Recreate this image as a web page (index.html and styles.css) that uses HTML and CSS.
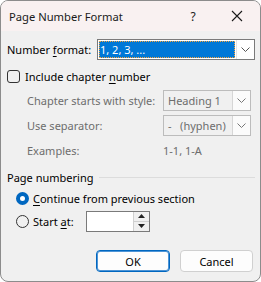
FILE: index.html
```html
<!DOCTYPE html>
<html>
<head>
<meta charset="utf-8">
<link rel="stylesheet" href="styles.css">
</head>
<body>
<div class="window">
  <div class="titlebar">
    <span class="title">Page Number Format</span>
    <span class="help">?</span>
    <span class="close">
      <svg width="12" height="12" viewBox="0 0 12 12"><path d="M1 1L11 11M11 1L1 11" stroke="#1a1a1a" stroke-width="1.1" fill="none"/></svg>
    </span>
  </div>
  <div class="content">
    <div class="row format-row">
      <span class="label">Number <u>f</u>ormat:</span>
      <div class="combo focused">
        <div class="combo-value"><span class="sel">1, 2, 3, ...</span></div>
        <div class="combo-btn">
          <svg width="9" height="5" viewBox="0 0 9 5"><path d="M0.5 0.5L4.5 4.5L8.5 0.5" stroke="#555" fill="none"/></svg>
        </div>
      </div>
    </div>

    <div class="row check-row">
      <span class="checkbox"></span>
      <span>Include chapter <u>n</u>umber</span>
    </div>

    <div class="row sub-row">
      <span class="label dis">Chapter starts with style:</span>
      <div class="combo disabled">
        <div class="combo-value">Heading 1</div>
        <div class="combo-btn">
          <svg width="9" height="5" viewBox="0 0 9 5"><path d="M0.5 0.5L4.5 4.5L8.5 0.5" stroke="#777" fill="none"/></svg>
        </div>
      </div>
    </div>

    <div class="row sub-row sep-row">
      <span class="label dis">Use separator:</span>
      <div class="combo disabled">
        <div class="combo-value">-&nbsp;&nbsp;&nbsp;(hyphen)</div>
        <div class="combo-btn">
          <svg width="9" height="5" viewBox="0 0 9 5"><path d="M0.5 0.5L4.5 4.5L8.5 0.5" stroke="#777" fill="none"/></svg>
        </div>
      </div>
    </div>

    <div class="row ex-row">
      <span class="label dis">Examples:</span>
      <span class="dis ex-val">1-1, 1-A</span>
    </div>

    <div class="group-head">
      <span>Page numbering</span>
      <span class="rule"></span>
    </div>

    <div class="row radio-row first-radio">
      <span class="radio on"></span>
      <span><u>C</u>ontinue from previous section</span>
    </div>

    <div class="row radio-row start-row">
      <span class="radio"></span>
      <span class="start-label">Start <u>a</u>t:</span>
      <div class="spin">
        <div class="spin-field"></div>
        <div class="spin-btns">
          <div class="spin-btn"><svg width="7" height="4" viewBox="0 0 7 4"><path d="M0 4L3.5 0L7 4Z" fill="#222"/></svg></div>
          <div class="spin-btn"><svg width="7" height="4" viewBox="0 0 7 4"><path d="M0 0L3.5 4L7 0Z" fill="#222"/></svg></div>
        </div>
      </div>
    </div>

    <div class="buttons">
      <button class="btn primary">OK</button>
      <button class="btn">Cancel</button>
    </div>
  </div>
</div>
</body>
</html>
```

FILE: styles.css
```css
* { box-sizing: border-box; }
html, body { margin: 0; padding: 0; background: #ffffff; }
body {
  font-family: "Noto Sans", "Open Sans", "Liberation Sans", sans-serif;
  font-size: 11px;
  color: #000;
}
u { text-decoration: underline; text-underline-offset: 2px; }

.window {
  width: 261px;
  height: 282px;
  border: 1px solid #8c8c8c;
  border-radius: 8px;
  background: #f0f0f0;
  overflow: hidden;
  display: flex;
  flex-direction: column;
}

.titlebar {
  height: 30px;
  flex: none;
  background: #f9f1f1;
  display: flex;
  align-items: center;
  padding-left: 8px;
}
.title { flex: 1; font-size: 11.2px; color: #1a1a1a; }
.help { width: 46px; text-align: center; font-size: 12px; color: #1a1a1a; margin-right: -2px; }
.close { width: 46px; display: flex; justify-content: center; align-items: center; }

.content {
  flex: 1;
  padding: 8px 5px 0 6px;
  display: flex;
  flex-direction: column;
}

.row { display: flex; align-items: center; }
.label { white-space: nowrap; }
.dis { color: #6d6d6d; }

.format-row { height: 21px; flex: none; }
.format-row .label { width: 90px; }

.combo {
  display: flex;
  height: 21px;
  border: 1px solid #7a7a7a;
  background: #fff;
}
.format-row .combo { width: 158px; }
.combo-value {
  flex: 1;
  display: flex;
  align-items: center;
  padding-left: 2px;
  white-space: nowrap;
}
.combo.focused .combo-value { padding: 1px; }
.sel {
  flex: 1;
  align-self: stretch;
  display: flex;
  align-items: center;
  background: #0078d7;
  color: #fff;
  padding-left: 1px;
  outline: 1px dotted #f7a43b;
  outline-offset: -1px;
}
.combo-btn {
  width: 18px;
  display: flex;
  align-items: center;
  justify-content: center;
  background: #fff;
  border-left: 1px solid #e3e3e3;
}

.check-row { margin-top: 9px; height: 14px; flex: none; }
.checkbox {
  width: 13px;
  height: 13px;
  border: 1px solid #333;
  border-radius: 3px;
  background: #f0f0f0;
  margin-right: 5px;
}

.sub-row { margin-top: 6px; height: 23px; padding-left: 20px; flex: none; }
.sub-row .label { width: 136px; }
.sep-row { margin-top: 2px; }
.combo.disabled {
  width: 88px;
  border-color: #bcbcbc;
  background: #f0f0f0;
  color: #6d6d6d;
}
.combo.disabled .combo-value { padding-left: 4px; }
.combo.disabled .combo-btn { background: #fbfbfb; border-left: 1px solid #d6d6d6; }

.ex-row { margin-top: 2px; height: 22px; padding-left: 20px; flex: none; }
.ex-row .label { width: 136px; }

.group-head {
  margin-top: 6px;
  height: 20px;
  flex: none;
  display: flex;
  align-items: center;
}
.group-head .rule { flex: 1; height: 1px; background: #dcdcdc; margin-left: 6px; }

.radio-row { padding-left: 9px; height: 22px; flex: none; }
.first-radio { margin-top: 0; }
.radio {
  width: 13px;
  height: 13px;
  border-radius: 50%;
  border: 1px solid #333;
  margin-right: 4px;
  background: #f0f0f0;
}
.radio.on {
  border: 4px solid #0067c0;
  background: #fff;
}
.start-row { margin-top: 1px; }
.start-label { width: 53px; }
.spin {
  display: flex;
  width: 64px;
  height: 21px;
  border: 1px solid #7a7a7a;
  background: #fff;
}
.spin-field { flex: 1; }
.spin-btns {
  width: 16px;
  display: flex;
  flex-direction: column;
  border-left: 1px solid #d0d0d0;
  background: #f0f0f0;
}
.spin-btn {
  flex: 1;
  display: flex;
  align-items: center;
  justify-content: center;
}
.spin-btn + .spin-btn { border-top: 1px solid #d0d0d0; }

.buttons {
  margin-top: 18px;
  margin-right: 2px;
  flex: none;
  display: flex;
  justify-content: flex-end;
  gap: 10px;
}
.btn {
  font-family: inherit;
  font-size: 11px;
  height: 22px;
  width: 73px;
  background: #fdfdfd;
  border: 1px solid #d0d0d0;
  border-radius: 4px;
  color: #000;
  padding: 0;
}
.btn.primary {
  width: 74px;
  border: 1px solid #0067c0;
  box-shadow: inset 0 0 0 1px #4d94d6;
  background: #fdfdfd;
}
```
